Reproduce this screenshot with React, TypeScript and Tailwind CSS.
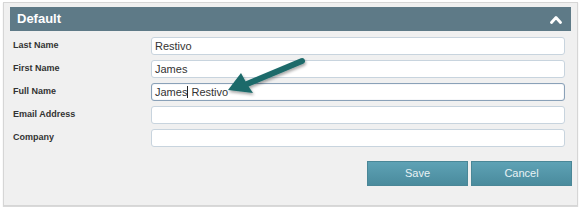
import React from "react";

const rows = [
  { label: "Last Name", value: "Restivo" },
  { label: "First Name", value: "James" },
  { label: "Full Name", value: "James Restivo", focus: true },
  { label: "Email Address", value: "" },
  { label: "Company", value: "" },
];

export default function App() {
  return (
    <div className="w-[580px] h-[207px] bg-white relative" style={{ fontFamily: '"Liberation Sans", Arial, sans-serif' }}>
      <div className="absolute left-[3px] top-[2px] w-[575px] h-[204px] border border-[#d6d6d6] bg-[#f0f0f0] shadow-[0_1px_1px_rgba(0,0,0,0.15)]">
        <div className="mx-[6px] mt-[4px] h-[24px] bg-[#5e7a87] flex items-center justify-between pl-[7px] pr-[9px]">
          <span className="text-white font-bold text-[13px]">Default</span>
          <svg width="12" height="9" viewBox="0 0 12 9">
            <path d="M1.5 7.5 L6 2.5 L10.5 7.5" stroke="white" strokeWidth="2.8" fill="none" strokeLinecap="round" strokeLinejoin="round" />
          </svg>
        </div>
        <div className="flex flex-col gap-[5px] mt-[6px]">
          {rows.map((r) => (
            <div key={r.label} className="flex items-center h-[18px]">
              <div className="w-[147px] pl-[9px] text-[9px] font-bold text-[#333]">{r.label}</div>
              <div
                className={`w-[414px] h-[18px] rounded-[3px] bg-white flex items-center px-[3px] text-[11px] text-[#333] border whitespace-pre ${
                  r.focus ? "border-[#8aa1b8] shadow-[inset_0_0_1px_rgba(100,130,160,0.6)]" : "border-[#c8d4de]"
                }`}
              >
                {r.focus ? (
                  <span className="flex items-center whitespace-pre">
                    James<span className="inline-block w-[1px] h-[12px] bg-[#222]"></span>{" Restivo"}
                  </span>
                ) : (
                  r.value
                )}
              </div>
            </div>
          ))}
        </div>
        <div className="flex justify-end gap-[3px] pr-[5px] mt-[14px]">
          <button className="w-[101px] h-[25px] bg-gradient-to-b from-[#5ea2b5] to-[#4a8b9d] border border-[#4a8797] text-[#e8f2f5] text-[11px]">Save</button>
          <button className="w-[101px] h-[25px] bg-gradient-to-b from-[#5ea2b5] to-[#4a8b9d] border border-[#4a8797] text-[#e8f2f5] text-[11px]">Cancel</button>
        </div>
      </div>
      <svg className="absolute left-0 top-0 pointer-events-none" width="580" height="207" viewBox="0 0 580 207">
        <defs>
          <filter id="sh" x="-20%" y="-20%" width="140%" height="140%">
            <feGaussianBlur in="SourceAlpha" stdDeviation="1.5" />
            <feOffset dx="1" dy="2" result="b" />
            <feComponentTransfer><feFuncA type="linear" slope="0.35" /></feComponentTransfer>
            <feMerge><feMergeNode /><feMergeNode in="SourceGraphic" /></feMerge>
          </filter>
        </defs>
        <g filter="url(#sh)">
          <path d="M302 61 L247 84" stroke="#1d6b6b" strokeWidth="6" strokeLinecap="round" />
          <path d="M228 90 L241 73 L247 84 L253 93 Z" fill="#1d6b6b" />
        </g>
      </svg>
    </div>
  );
}
